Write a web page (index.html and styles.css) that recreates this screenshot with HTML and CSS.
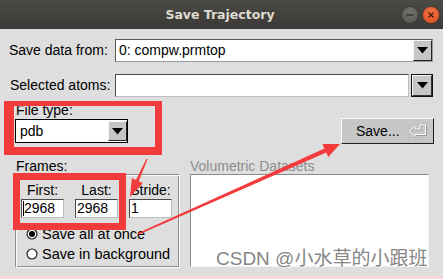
FILE: index.html
```html
<!DOCTYPE html>
<html>
<head>
<meta charset="utf-8">
<title>Save Trajectory</title>
<link rel="stylesheet" href="styles.css">
</head>
<body>
<div class="window">
  <div class="titlebar">
    <span></span>
    <span class="title">Save Trajectory</span>
    <div class="wm-buttons">
      <span class="wm-btn wm-min"><svg width="16" height="16" viewBox="0 0 16 16"><line x1="4.5" y1="8" x2="11.5" y2="8" stroke="#2f2f2d" stroke-width="1.4"/></svg></span>
      <span class="wm-btn wm-close"><svg width="16" height="16" viewBox="0 0 16 16"><path d="M5.5 5.5 L10.5 10.5 M10.5 5.5 L5.5 10.5" stroke="#4a1a0a" stroke-width="1.3"/></svg></span>
    </div>
  </div>

  <div class="content">
    <div class="row row-from">
      <span class="side-lbl">Save data from:</span>
      <div class="combo combo-wide">
        <span class="combo-text">0: compw.prmtop</span>
        <span class="combo-btn"><svg width="11" height="7" viewBox="0 0 11 7"><polygon points="0,0 11,0 5.5,6.5" fill="#000"/></svg></span>
      </div>
    </div>

    <div class="row row-atoms">
      <span class="side-lbl">Selected atoms:</span>
      <div class="entry entry-atoms"></div>
      <div class="menu-btn">
        <span class="menu-btn-inner"><svg width="11" height="7" viewBox="0 0 11 7"><polygon points="0,0 11,0 5.5,6.5" fill="#000"/></svg></span>
      </div>
    </div>

    <div class="row row-type">
      <div class="filetype">
        <div class="lbl">File type:</div>
        <div class="combo combo-type">
          <span class="combo-text">pdb</span>
          <span class="combo-btn"><svg width="11" height="7" viewBox="0 0 11 7"><polygon points="0,0 11,0 5.5,6.5" fill="#000"/></svg></span>
        </div>
      </div>
      <div class="save-btn">
        <span class="save-text">Save...</span>
        <svg class="return-icon" width="19" height="14" viewBox="0 0 19 14">
          <polygon points="1.5,7.5 7,2.5 7,5 12,5 12,1 17.5,1 17.5,10.5 7,10.5 7,12.5" fill="none" stroke="#8c8c8c" stroke-width="1" transform="translate(0.8,0.8)"/>
          <polygon points="1.5,7.5 7,2.5 7,5 12,5 12,1 17.5,1 17.5,10.5 7,10.5 7,12.5" fill="none" stroke="#ffffff" stroke-width="1"/>
        </svg>
      </div>
    </div>

    <div class="row row-frames">
      <div class="frames">
        <div class="lbl">Frames:</div>
        <div class="groupbox">
          <div class="fields">
            <div class="field">
              <span class="field-lbl">First:</span>
              <div class="entry entry-sm"><span class="caret"></span>2968</div>
            </div>
            <div class="field">
              <span class="field-lbl">Last:</span>
              <div class="entry entry-sm">2968</div>
            </div>
            <div class="field">
              <span class="field-lbl">Stride:</span>
              <div class="entry entry-sm">1</div>
            </div>
          </div>
          <div class="radio radio-first">
            <svg width="12" height="12" viewBox="0 0 12 12"><circle cx="6" cy="6" r="5" fill="#fff" stroke="#222" stroke-width="1.2"/><circle cx="6" cy="6" r="3" fill="#000"/></svg>
            <span>Save all at once</span>
          </div>
          <div class="radio">
            <svg width="12" height="12" viewBox="0 0 12 12"><circle cx="6" cy="6" r="5" fill="#fff" stroke="#222" stroke-width="1.2"/></svg>
            <span>Save in background</span>
          </div>
        </div>
      </div>
      <div class="vol">
        <div class="lbl dim">Volumetric Datasets</div>
        <div class="listbox"></div>
      </div>
    </div>
  </div>

  <div class="redbox redbox-type"></div>
  <div class="redbox redbox-frames"></div>
  <svg class="arrows" width="443" height="279" viewBox="0 0 443 279">
    <polygon points="147.55,159.25 138.73,181.18 142.84,183.02 130,197 131.88,178.12 135.99,179.96 146.45,158.75" fill="#f33b3b"/>
    <polygon points="138.33,234.73 326.28,152.52 328.23,156.91 340,144 322.53,144.11 324.48,148.5 137.67,233.27" fill="#f33b3b"/>
  </svg>
  <div class="watermark">CSDN @小水草的小跟班</div>
</div>
</body>
</html>
```

FILE: styles.css
```css
* { box-sizing: border-box; }
html, body { margin: 0; padding: 0; }
body {
  width: 443px;
  height: 279px;
  overflow: hidden;
  font-family: "Liberation Sans", Arial, sans-serif;
  font-size: 14px;
  color: #000;
  background: #dedede;
}
.window {
  position: relative;
  width: 443px;
  height: 279px;
  background: linear-gradient(to bottom, #dedede 276px, #f6d8d8 276px);
}
.titlebar {
  height: 29px;
  background: linear-gradient(#4b4a45, #3a3935);
  display: grid;
  grid-template-columns: 1fr auto 1fr;
  align-items: center;
}
.title {
  font-family: "DejaVu Sans", sans-serif;
  font-weight: bold;
  font-size: 12.5px;
  color: #dfdbd2;
  line-height: 29px;
  margin-left: -3px;
}
.wm-buttons {
  justify-self: end;
  display: flex;
  gap: 5px;
  padding-right: 4px;
  margin-top: 1px;
}
.wm-btn {
  width: 16px;
  height: 16px;
  border-radius: 50%;
  display: block;
}
.wm-btn svg { display: block; }
.wm-min { background: radial-gradient(circle at 50% 35%, #72716c, #55544f); box-shadow: 0 0 0 0.5px #2e2d2a; }
.wm-close { background: radial-gradient(circle at 50% 35%, #f27045, #df4f1f); box-shadow: 0 0 0 0.5px #6a2a12; }

.content { padding: 0 10px 0 9px; }
.row { display: flex; }
.side-lbl { width: 106px; line-height: 23px; white-space: nowrap; }
.row-from { margin-top: 10px; height: 23px; }
.row-atoms { margin-top: 12px; height: 23px; }
.row-atoms .side-lbl { padding-left: 1px; }

.combo {
  display: flex;
  background: #fff;
  border: 1px solid;
}
.combo-wide {
  width: 318px;
  height: 23px;
  border-color: #5a5a5a #9a9a9a #9a9a9a #5a5a5a;
}
.combo-text { flex: 1; padding-left: 3px; line-height: 21px; white-space: nowrap; }
.combo-btn {
  width: 19px;
  background: #c6c6c6;
  border: 1px solid;
  border-color: #f6f6f6 #222 #222 #f6f6f6;
  display: flex;
  align-items: center;
  justify-content: center;
}
.combo-btn svg { display: block; }

.entry {
  background: #fff;
  border: 1px solid;
  border-color: #4a4a4a #bdbdbd #bdbdbd #4a4a4a;
}
.entry-atoms { width: 294px; height: 23px; }
.menu-btn {
  width: 22px;
  height: 23px;
  margin-left: 2px;
  border: 1px solid #111;
  display: flex;
}
.menu-btn-inner {
  flex: 1;
  background: #c6c6c6;
  border: 1px solid;
  border-color: #f6f6f6 #333 #333 #f6f6f6;
  display: flex;
  align-items: center;
  justify-content: center;
}

.lbl { line-height: 16px; white-space: nowrap; }
.filetype { margin-left: 6px; }
.filetype .lbl { margin-top: 5px; padding-left: 1px; }
.combo-type {
  width: 113px;
  height: 24px;
  margin-top: 1px;
  border-color: #000;
}
.combo-type .combo-text { padding-left: 4px; line-height: 22px; }
.combo-type .combo-btn { margin: 1px 0 1px 0; }

.save-btn {
  margin-left: auto;
  margin-right: -1px;
  margin-top: 21px;
  width: 93px;
  height: 26px;
  background: #c6c6c6;
  border: 1px solid;
  border-color: #fafafa #1e1e1e #1e1e1e #fafafa;
  display: flex;
  align-items: center;
  padding-left: 14px;
}
.save-text { line-height: 24px; }
.return-icon { display: block; margin-left: 8px; }

.row-frames { margin-top: 14px; }
.frames { margin-left: 6px; width: 165px; }
.frames > .lbl { padding-left: 1px; }
.groupbox {
  height: 94px;
  border: 1px solid;
  border-color: #8e8e8e #fafafa #fafafa #8e8e8e;
  box-shadow: inset 1px 1px 0 #fafafa, inset -1px -1px 0 #8e8e8e;
}
.fields {
  display: flex;
  gap: 11px;
  padding: 7px 0 0 5px;
}
.field {
  width: 43px;
  display: flex;
  flex-direction: column;
  align-items: center;
}
.field-lbl { line-height: 16px; white-space: nowrap; }
.entry-sm {
  width: 43px;
  height: 19px;
  margin-top: 1px;
  line-height: 17px;
  padding-left: 1px;
  align-self: stretch;
  white-space: nowrap;
}
.caret {
  display: inline-block;
  width: 1px;
  height: 15px;
  background: #000;
  vertical-align: -3px;
}
.radio {
  display: flex;
  align-items: center;
  height: 20px;
  padding-left: 10px;
  gap: 4px;
  white-space: nowrap;
  font-size: 14.5px;
}
.radio svg { display: block; }
.radio-first { margin-top: 6px; }

.vol { margin-left: 10px; width: 239px; }
.dim { color: #8c8c8c; }
.listbox {
  height: 93px;
  background: #fff;
  border: 1px solid;
  border-color: #8a8a8a #f2f2f2 #f2f2f2 #8a8a8a;
}

.redbox {
  position: absolute;
  border-style: solid;
  border-color: #f33b3b;
}
.redbox-type {
  left: 4px;
  top: 101px;
  width: 158px;
  height: 54px;
  border-width: 5px 7px 8px 10px;
}
.redbox-frames {
  left: 13px;
  top: 173px;
  width: 113px;
  height: 57px;
  border-width: 7px;
}
.arrows {
  position: absolute;
  left: 0;
  top: 0;
  pointer-events: none;
}
.watermark {
  position: absolute;
  left: 216px;
  top: 248px;
  font-family: "Liberation Sans", "Noto Sans CJK SC", sans-serif;
  font-size: 19px;
  line-height: 22px;
  color: #858585;
  text-shadow: 1px 1px 0 rgba(255, 255, 255, 0.8);
  white-space: nowrap;
}
```
